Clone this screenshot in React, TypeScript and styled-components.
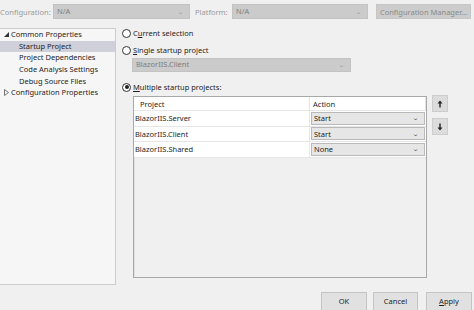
import React from "react";
import styled, { createGlobalStyle } from "styled-components";

const Global = createGlobalStyle`
  html, body { margin: 0; padding: 0; background: #f0f0f0; }
  * { box-sizing: border-box; }
`;

const Dialog = styled.div`
  width: 474px;
  height: 310px;
  overflow: hidden;
  background: #f0f0f0;
  font-family: "Noto Sans", "Open Sans", sans-serif;
  font-size: 7.5px;
  color: #1e1e1e;
  display: flex;
  flex-direction: column;
  & > * { flex-shrink: 0; }
`;

const TopBar = styled.div`
  height: 28px;
  padding-top: 4px;
  display: flex;
  align-items: flex-start;
`;

const TopLabel = styled.div<{ $w: number; $pl?: number }>`
  width: ${(p) => p.$w}px;
  padding-left: ${(p) => p.$pl ?? 0}px;
  height: 16px;
  line-height: 16px;
  color: #9a9a9a;
  white-space: nowrap;
`;

const DisabledSelect = styled.div<{ $w: number; $h?: number }>`
  width: ${(p) => p.$w}px;
  height: ${(p) => p.$h ?? 15}px;
  background: #cbcbcb;
  border: 1px solid #c3c3c3;
  color: #7e7e7e;
  display: flex;
  align-items: center;
  justify-content: space-between;
  padding: 0 6px 0 3px;
  line-height: 1;
`;

const Chevron = styled.span<{ $c?: string }>`
  color: ${(p) => p.$c ?? "#9a9a9a"};
  font-size: 6px;
  transform: scaleX(1.4);
`;

const TopButton = styled.div`
  margin-left: 8px;
  width: 95px;
  height: 15px;
  background: #cccccc;
  border: 1px solid #c6c6c6;
  color: #8a8a8a;
  display: flex;
  align-items: center;
  justify-content: center;
`;

const Main = styled.div`
  height: 257px;
  display: flex;
`;

const Tree = styled.div`
  width: 116px;
  height: 257px;
  background: #f6f6f6;
  border: 1px solid #cdcdcd;
  border-left: none;
`;

const TreeRow = styled.div<{ $indent: number; $selected?: boolean }>`
  height: 11.6px;
  display: flex;
  align-items: center;
  padding-left: ${(p) => p.$indent}px;
  padding-bottom: 1px;
  background: ${(p) => (p.$selected ? "#cfd0da" : "transparent")};
  white-space: nowrap;
  color: #1e1e1e;
`;

const Twisty = styled.span`
  width: 7px;
  display: inline-flex;
  align-items: center;
`;

const Content = styled.div`
  flex: 1;
  padding-left: 6px;
  display: flex;
  flex-direction: column;
`;

const RadioRow = styled.div<{ $mt: number }>`
  margin-top: ${(p) => p.$mt}px;
  height: 10px;
  display: flex;
  align-items: center;
  gap: 2px;
`;

const RadioCircle = styled.span<{ $checked?: boolean }>`
  width: 9px;
  height: 9px;
  border-radius: 50%;
  border: 1px solid #333;
  background: #fff;
  display: inline-flex;
  align-items: center;
  justify-content: center;
  &::after {
    content: "";
    width: 4px;
    height: 4px;
    border-radius: 50%;
    background: ${(p) => (p.$checked ? "#222" : "transparent")};
  }
`;

const U = styled.span`
  text-decoration: underline;
  text-underline-offset: 1px;
`;

const Indented = styled.div<{ $mt: number }>`
  margin-top: ${(p) => p.$mt}px;
  padding-left: 10px;
  display: flex;
`;

const GridArea = styled.div`
  margin-top: 4px;
  padding-left: 11px;
  display: flex;
  align-items: flex-start;
  gap: 5px;
`;

const Grid = styled.div`
  width: 294px;
  height: 182px;
  border: 1px solid #a8a8a8;
  box-shadow: inset 1px 1px 0 #e0e0e0;
  background: #f0f0f0;
`;

const GridRow = styled.div<{ $h: number }>`
  height: ${(p) => p.$h}px;
  display: grid;
  grid-template-columns: 176px 1fr;
  background: #fff;
  border-bottom: 1px solid #e6e6e6;
`;

const HeadCell = styled.div<{ $pl: number }>`
  display: flex;
  align-items: center;
  padding-left: ${(p) => p.$pl}px;
  border-right: 1px solid #e3e3e3;
  background: #fff;
`;

const Cell = styled.div`
  display: flex;
  align-items: center;
  padding-left: 1px;
  border-right: 1px solid #e6e6e6;
`;

const ActionCell = styled.div`
  display: flex;
  align-items: center;
  padding: 0 1px;
`;

const ActionSelect = styled.div`
  width: 100%;
  height: 13px;
  background: #e6e6e6;
  border: 1px solid #b9b9b9;
  display: flex;
  align-items: center;
  justify-content: space-between;
  padding: 0 6px 0 2px;
`;

const SideButtons = styled.div`
  display: flex;
  flex-direction: column;
  gap: 6px;
  margin-top: -1px;
`;

const MoveButton = styled.div`
  width: 16px;
  height: 17px;
  background: #dcdcdc;
  border: 1px solid #cdcdcd;
  display: flex;
  align-items: center;
  justify-content: center;
`;

const Footer = styled.div`
  padding-top: 7px;
  padding-right: 2px;
  display: flex;
  justify-content: flex-end;
  gap: 6px;
`;

const DlgButton = styled.div<{ $w: number; $ml?: number }>`
  width: ${(p) => p.$w}px;
  margin-left: ${(p) => p.$ml ?? 0}px;
  height: 21px;
  background: #e1e1e1;
  border: 1px solid #c4c4c4;
  display: flex;
  align-items: center;
  justify-content: center;
  padding-bottom: 3px;
  color: #1e1e1e;
`;

const Expanded = () => (
  <svg width="5" height="5" viewBox="0 0 5 5">
    <polygon points="5,0 5,5 0,5" fill="#333" />
  </svg>
);

const Collapsed = () => (
  <svg width="5" height="7" viewBox="0 0 5 7">
    <polygon points="0.5,0.5 4.5,3.5 0.5,6.5" fill="none" stroke="#555" strokeWidth="0.8" />
  </svg>
);

const Arrow = ({ up }: { up?: boolean }) => (
  <svg width="6" height="8" viewBox="0 0 6 8">
    {up ? (
      <path d="M3 0.5 L0.5 3.5 H2.3 V7.5 H3.7 V3.5 H5.5 Z" fill="#222" />
    ) : (
      <path d="M3 7.5 L0.5 4.5 H2.3 V0.5 H3.7 V4.5 H5.5 Z" fill="#222" />
    )}
  </svg>
);

const rows = [
  { name: "BlazorIIS.Server", action: "Start" },
  { name: "BlazorIIS.Client", action: "Start" },
  { name: "BlazorIIS.Shared", action: "None" },
];

export default function App() {
  return (
    <>
      <Global />
      <Dialog>
        <TopBar>
          <TopLabel $w={53}>Configuration:</TopLabel>
          <DisabledSelect $w={137}>
            <span>N/A</span>
            <Chevron>⌄</Chevron>
          </DisabledSelect>
          <TopLabel $w={42} $pl={5}>Platform:</TopLabel>
          <DisabledSelect $w={136}>
            <span>N/A</span>
            <Chevron>⌄</Chevron>
          </DisabledSelect>
          <TopButton>Configuration Manager...</TopButton>
        </TopBar>
        <Main>
          <Tree>
            <TreeRow $indent={4}>
              <Twisty><Expanded /></Twisty>
              Common Properties
            </TreeRow>
            <TreeRow $indent={19} $selected>Startup Project</TreeRow>
            <TreeRow $indent={19}>Project Dependencies</TreeRow>
            <TreeRow $indent={19}>Code Analysis Settings</TreeRow>
            <TreeRow $indent={19}>Debug Source Files</TreeRow>
            <TreeRow $indent={4}>
              <Twisty><Collapsed /></Twisty>
              Configuration Properties
            </TreeRow>
          </Tree>
          <Content>
            <RadioRow $mt={0}>
              <RadioCircle />
              <span>
                C<U>u</U>rrent selection
              </span>
            </RadioRow>
            <RadioRow $mt={7}>
              <RadioCircle />
              <span>
                <U>S</U>ingle startup project
              </span>
            </RadioRow>
            <Indented $mt={3}>
              <DisabledSelect $w={219} $h={14}>
                <span>BlazorIIS.Client</span>
                <Chevron>⌄</Chevron>
              </DisabledSelect>
            </Indented>
            <RadioRow $mt={10}>
              <RadioCircle $checked />
              <span>
                <U>M</U>ultiple startup projects:
              </span>
            </RadioRow>
            <GridArea>
              <Grid>
                <GridRow $h={14}>
                  <HeadCell $pl={6}>Project</HeadCell>
                  <HeadCell $pl={3}>Action</HeadCell>
                </GridRow>
                {rows.map((r) => (
                  <GridRow $h={15.5} key={r.name}>
                    <Cell>{r.name}</Cell>
                    <ActionCell>
                      <ActionSelect>
                        <span>{r.action}</span>
                        <Chevron $c="#555">⌄</Chevron>
                      </ActionSelect>
                    </ActionCell>
                  </GridRow>
                ))}
              </Grid>
              <SideButtons>
                <MoveButton><Arrow up /></MoveButton>
                <MoveButton><Arrow /></MoveButton>
              </SideButtons>
            </GridArea>
          </Content>
        </Main>
        <Footer>
          <DlgButton $w={46}>OK</DlgButton>
          <DlgButton $w={45}>Cancel</DlgButton>
          <DlgButton $w={46} $ml={2}>
            <span>
              <U>A</U>pply
            </span>
          </DlgButton>
        </Footer>
      </Dialog>
    </>
  );
}
